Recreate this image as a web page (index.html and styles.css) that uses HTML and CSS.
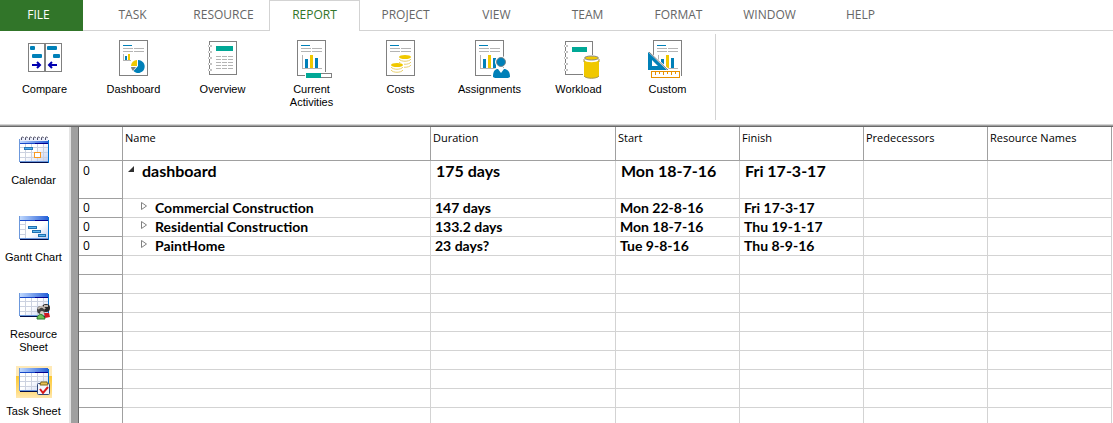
FILE: index.html
```html
<!DOCTYPE html>
<html lang="en">
<head>
  <meta charset="UTF-8">
  <meta name="viewport" content="width=device-width, initial-scale=1.0">
  <title>dashboard - Task Sheet</title>
  <link rel="stylesheet" href="styles.css">
</head>
<body>

  <!-- Menu tabs -->
  <nav class="tabs">
    <a class="file-tab" href="#file">FILE</a>
    <a class="tab" href="#task">TASK</a>
    <a class="tab" href="#resource">RESOURCE</a>
    <a class="tab active" href="#report">REPORT</a>
    <a class="tab" href="#project">PROJECT</a>
    <a class="tab" href="#view">VIEW</a>
    <a class="tab" href="#team">TEAM</a>
    <a class="tab" href="#format">FORMAT</a>
    <a class="tab" href="#window">WINDOW</a>
    <a class="tab" href="#help">HELP</a>
  </nav>

  <!-- Shared icon parts -->
  <svg class="defs" width="0" height="0" aria-hidden="true">
    <defs>
      <linearGradient id="titleBar">
        <stop offset="0" stop-color="#c4dcff"/>
        <stop offset="1" stop-color="#2860d8"/>
      </linearGradient>
      <linearGradient id="sheet" x2="1" y2="1">
        <stop offset="0" stop-color="#ffffff"/>
        <stop offset="0.5" stop-color="#ffffff"/>
        <stop offset="1" stop-color="#c4d0f0"/>
      </linearGradient>
      <g id="page" shape-rendering="crispEdges">
        <rect x="5.5" y="2.5" width="28" height="35" fill="#fff" stroke="#808080"/>
        <path d="M9 7.5h9" stroke="#0080b8"/>
        <path d="M9 10.5h10M20 10.5h10M9 13.5h10M20 13.5h10" stroke="#b4b4b4"/>
      </g>
      <g id="bars" shape-rendering="crispEdges">
        <path d="M10.5 17v13.5H30" fill="none" stroke="#b4b4b4"/>
        <path d="M13 21h3v9h-3zM23 20h3v10h-3z" fill="#0080b8"/>
        <path d="M18 17h3v13h-3z" fill="#f0c800"/>
      </g>
      <g id="notebook" shape-rendering="crispEdges">
        <rect x="6.5" y="3.5" width="27" height="33" fill="#fff" stroke="#808080"/>
        <path d="M5 7h4v2H5zM5 13h4v2H5zM5 19h4v2H5zM5 25h4v2H5zM5 31h4v2H5z" fill="#c4c4c4"/>
        <path d="M6 7h1v2H6zM6 13h1v2H6zM6 19h1v2H6zM6 25h1v2H6zM6 31h1v2H6z" fill="#fff"/>
      </g>
      <g id="sheetGrid" shape-rendering="crispEdges">
        <path d="M5 6h28v22H5z" fill="#001060"/>
        <path d="M4 5h28v21H4z" fill="url(#sheet)"/>
        <path d="M4 12.5h28M4 17.5h28M4 22.5h28M9.5 9v17M15.5 9v17M21.5 9v17M27.5 9v17" stroke="#ccd2e0"/>
        <path d="M3 4h29v4H3z" fill="url(#titleBar)"/>
        <path d="M4 8.5h15" stroke="#1848c8"/>
        <path d="M19 8.5h13" stroke="#000090"/>
        <path d="M3.5 4v23M3 26.5h29" fill="none" stroke="#6c98dc"/>
        <path d="M4 27.5h29" stroke="#000c48"/>
        <path d="M32.5 5v23" stroke="#0070d0"/>
      </g>
    </defs>
  </svg>

  <!-- Report ribbon -->
  <div class="ribbon">
    <div class="ribbon-group">
      <button class="ribbon-button">
        <svg class="ribbon-icon" viewBox="0 0 39 40">
          <g shape-rendering="crispEdges" fill="#fff" stroke="#808080">
            <rect x="3.5" y="5.5" width="16" height="28"/>
            <rect x="20.5" y="5.5" width="16" height="28"/>
          </g>
          <g fill="#0080b8">
            <rect x="5" y="8" width="5" height="4" rx="1"/>
            <rect x="7" y="16" width="10" height="4" rx="1"/>
            <rect x="22" y="8" width="10" height="4" rx="1"/>
            <rect x="28" y="16" width="7" height="4" rx="1"/>
          </g>
          <path d="M7 27h8M12 24l3 3-3 3M32 27h-8M27 24l-3 3 3 3" fill="none" stroke="#0000b0" stroke-width="2"/>
        </svg>
        <span>Compare</span>
      </button>
      <button class="ribbon-button">
        <svg class="ribbon-icon" viewBox="0 0 39 40">
          <use href="#page"/>
          <g shape-rendering="crispEdges">
            <path d="M9.5 16v6.5H17" fill="none" stroke="#b4b4b4"/>
            <path d="M11 18h2v4h-2z" fill="#0080b8"/>
            <path d="M14 16h2v6h-2z" fill="#f0c800"/>
          </g>
          <path d="M24 28V22a6.5 6.5 0 1 1-4.5 11z" fill="#0080b8"/>
          <path d="M23 28h-6a6 6 0 0 1 6-6z" fill="#f0c800"/>
          <path d="M22 29h-5a6 6 0 0 0 2 4z" fill="#808080"/>
        </svg>
        <span>Dashboard</span>
      </button>
      <button class="ribbon-button">
        <svg class="ribbon-icon" viewBox="0 0 39 40">
          <use href="#notebook"/>
          <g shape-rendering="crispEdges">
            <path d="M13 8h17v5H13z" fill="#00a896"/>
            <path d="M13 18.5h5m1 0h5m1 0h5M13 21.5h5m1 0h5m1 0h5M13 24.5h5m1 0h5m1 0h5M13 27.5h5m1 0h5m1 0h5M13 30.5h5m1 0h5m1 0h5" stroke="#b4b4b4"/>
          </g>
        </svg>
        <span>Overview</span>
      </button>
      <button class="ribbon-button">
        <svg class="ribbon-icon" viewBox="0 0 39 40">
          <use href="#page"/>
          <use href="#bars"/>
          <g shape-rendering="crispEdges">
            <path d="M13 34h27v6H13z" fill="#fff"/>
            <path d="M14 35h15v5H14z" fill="#00a896"/>
            <path d="M29 35.5h10.5v4H29" fill="none" stroke="#808080"/>
          </g>
        </svg>
        <span>Current Activities</span>
      </button>
      <button class="ribbon-button">
        <svg class="ribbon-icon" viewBox="0 0 39 40">
          <use href="#page"/>
          <g fill="none" stroke="#e8d070">
            <path d="M18 21c2 3 10 3 12 0M18 24c2 3 10 3 12 0M18 27c2 3 10 3 12 0"/>
          </g>
          <ellipse cx="24" cy="19" rx="6" ry="2" fill="#f0c800"/>
          <path d="M9 25h14v12H9z" fill="#fff"/>
          <g fill="none" stroke="#e8d070">
            <path d="M10 29c2 3 10 3 12 0M10 32c2 3 10 3 12 0"/>
          </g>
          <ellipse cx="16" cy="27" rx="6" ry="2" fill="#f0c800"/>
        </svg>
        <span>Costs</span>
      </button>
      <button class="ribbon-button">
        <svg class="ribbon-icon" viewBox="0 0 39 40">
          <use href="#page"/>
          <use href="#bars"/>
          <circle cx="31" cy="24" r="6" fill="#fff"/>
          <path d="M21 40c0-7 3-10 6-10h8c3 0 6 3 6 10z" fill="#fff"/>
          <circle cx="31" cy="24" r="4.5" fill="#0080b8" stroke="#78888c"/>
          <path d="M23 39c0-6 2-8 5-8l3 4 3-4c3 0 6 2 6 8l-2 1H25z" fill="#0080b8"/>
        </svg>
        <span>Assignments</span>
      </button>
      <button class="ribbon-button">
        <svg class="ribbon-icon" viewBox="0 0 39 40">
          <use href="#notebook"/>
          <path d="M13 9h15v5H13z" fill="#00a896" shape-rendering="crispEdges"/>
          <path d="M24 17h17v23H24z" fill="#fff"/>
          <path d="M25 22c2 3 13 3 15 0v16c-2 3-13 3-15 0z" fill="#f0c800"/>
          <ellipse cx="32.5" cy="20" rx="7" ry="2" fill="#f0c800" stroke="#888"/>
          <path d="M25 38c2 3 13 3 15 0M25 21v3M40 21v3" fill="none" stroke="#a89850"/>
        </svg>
        <span>Workload</span>
      </button>
      <button class="ribbon-button">
        <svg class="ribbon-icon" viewBox="0 0 39 40">
          <use href="#page"/>
          <use href="#bars"/>
          <path d="M0 12l22 20h12v8H0z" fill="#fff"/>
          <path d="M0 14l19 18H0zM4 22v6h6z" fill="#0080b8" fill-rule="evenodd"/>
          <path d="M1 14l19 18" stroke="#808080"/>
          <g shape-rendering="crispEdges" fill="none" stroke="#e89000">
            <rect x="3.5" y="33.5" width="28" height="6"/>
            <path d="M7.5 34v3M11.5 34v2M15.5 34v3M19.5 34v2M23.5 34v3M27.5 34v2"/>
          </g>
          <path d="M33.5 30v8" stroke="#808080"/>
        </svg>
        <span>Custom</span>
      </button>
    </div>
  </div>

  <main class="workspace">

    <!-- View switcher -->
    <aside class="views">
      <button class="view-button">
        <svg class="view-icon" viewBox="0 0 36 32">
          <use href="#sheetGrid"/>
          <path d="M4 3h28v3H4z" fill="#e8ecf8"/>
          <g fill="none" stroke="#505068">
            <path d="M5.5 5V3a1 1 0 0 1 2 0M9.5 5V3a1 1 0 0 1 2 0M13.5 5V3a1 1 0 0 1 2 0M17.5 5V3a1 1 0 0 1 2 0M21.5 5V3a1 1 0 0 1 2 0M25.5 5V3a1 1 0 0 1 2 0M29.5 5V3a1 1 0 0 1 2 0"/>
          </g>
          <g shape-rendering="crispEdges">
            <rect x="8.5" y="12.5" width="8" height="2" fill="#50b0f0" stroke="#2878b8"/>
            <rect x="18.5" y="17.5" width="6" height="5" fill="#fff" stroke="#f89820"/>
          </g>
        </svg>
        <span>Calendar</span>
      </button>
      <button class="view-button">
        <svg class="view-icon" viewBox="0 0 36 32">
          <use href="#sheetGrid"/>
          <g shape-rendering="crispEdges">
            <path d="M10 9h22v17H10z" fill="url(#sheet)"/>
            <path d="M12.5 14.5h8v2h-8zM16.5 18.5h8v2h-8zM22.5 22.5h7v2h-7z" fill="#60b8f0" stroke="#2070b0"/>
          </g>
        </svg>
        <span>Gantt Chart</span>
      </button>
      <button class="view-button">
        <svg class="view-icon" viewBox="0 0 36 32">
          <use href="#sheetGrid"/>
          <circle cx="30" cy="19" r="4" fill="#282828"/>
          <circle cx="25" cy="21" r="4" fill="#404040"/>
          <path d="M22 20c2-3 5-3 7 0M28 17h4" fill="none" stroke="#c0b8b0" stroke-width="2"/>
          <circle cx="26" cy="24" r="2" fill="#d8d0c8"/>
          <path d="M28 24h5l1 4-5 1z" fill="#d01820"/>
          <path d="M21 30c0-6 7-6 8 0z" fill="#70c058" stroke="#287828"/>
        </svg>
        <span>Resource Sheet</span>
      </button>
      <button class="view-button selected">
        <svg class="view-icon" viewBox="0 0 36 32">
          <g transform="translate(0 -2)">
            <use href="#sheetGrid"/>
          </g>
          <rect x="21.5" y="17.5" width="12" height="11" rx="1" fill="#f4f6ff" stroke="#304878"/>
          <path d="M24 19l1-3h6l1 3z" fill="#e8c050" stroke="#806820"/>
          <path d="M24 23l3 4 5-6" fill="none" stroke="#d81818" stroke-width="2"/>
        </svg>
        <span>Task Sheet</span>
      </button>
    </aside>

    <!-- Task table -->
    <div class="sheet">
      <table class="tasks">
        <colgroup>
          <col class="col-info">
          <col>
          <col class="col-duration">
          <col class="col-date">
          <col class="col-date">
          <col class="col-date">
          <col class="col-date">
        </colgroup>
        <thead>
          <tr><th></th><th>Name</th><th>Duration</th><th>Start</th><th>Finish</th><th>Predecessors</th><th>Resource Names</th></tr>
        </thead>
        <tbody>
          <tr class="project">
            <td>0</td>
            <td><div class="task-name"><button class="toggle" aria-label="Collapse dashboard"><svg viewBox="0 0 6 8" width="6" height="8"><path d="M6 1v6H0z" fill="#303030"/></svg></button>dashboard</div></td>
            <td>175 days</td><td>Mon 18-7-16</td><td>Fri 17-3-17</td><td></td><td></td>
          </tr>
          <tr class="task">
            <td>0</td>
            <td><div class="task-name"><button class="toggle" aria-label="Expand Commercial Construction"><svg viewBox="0 0 6 8" width="6" height="8"><path d="M.5.5l5 3.500-5 3.500z" fill="#fff" stroke="#808080"/></svg></button>Commercial Construction</div></td>
            <td>147 days</td><td>Mon 22-8-16</td><td>Fri 17-3-17</td><td></td><td></td>
          </tr>
          <tr class="task">
            <td>0</td>
            <td><div class="task-name"><button class="toggle" aria-label="Expand Residential Construction"><svg viewBox="0 0 6 8" width="6" height="8"><path d="M.5.5l5 3.500-5 3.500z" fill="#fff" stroke="#808080"/></svg></button>Residential Construction</div></td>
            <td>133.2 days</td><td>Mon 18-7-16</td><td>Thu 19-1-17</td><td></td><td></td>
          </tr>
          <tr class="task">
            <td>0</td>
            <td><div class="task-name"><button class="toggle" aria-label="Expand PaintHome"><svg viewBox="0 0 6 8" width="6" height="8"><path d="M.5.5l5 3.500-5 3.500z" fill="#fff" stroke="#808080"/></svg></button>PaintHome</div></td>
            <td>23 days?</td><td>Tue 9-8-16</td><td>Thu 8-9-16</td><td></td><td></td>
          </tr>
          <tr><td></td><td></td><td></td><td></td><td></td><td></td><td></td></tr>
          <tr><td></td><td></td><td></td><td></td><td></td><td></td><td></td></tr>
          <tr><td></td><td></td><td></td><td></td><td></td><td></td><td></td></tr>
          <tr><td></td><td></td><td></td><td></td><td></td><td></td><td></td></tr>
          <tr><td></td><td></td><td></td><td></td><td></td><td></td><td></td></tr>
          <tr><td></td><td></td><td></td><td></td><td></td><td></td><td></td></tr>
          <tr><td></td><td></td><td></td><td></td><td></td><td></td><td></td></tr>
          <tr><td></td><td></td><td></td><td></td><td></td><td></td><td></td></tr>
          <tr><td></td><td></td><td></td><td></td><td></td><td></td><td></td></tr>
        </tbody>
      </table>
    </div>
  </main>

</body>
</html>
```

FILE: styles.css
```css
* {
  margin: 0;
  padding: 0;
  box-sizing: border-box;
}

body {
  height: 100vh;
  display: flex;
  flex-direction: column;
  overflow: hidden;
  background: #fff;
  color: #000;
  font-family: "Liberation Sans", Arial, sans-serif;
  font-size: 11px;
  line-height: 13px;
}

button {
  border: none;
  background: transparent;
  color: inherit;
  font: inherit;
  cursor: pointer;
}

.defs {
  position: absolute;
}

/* Tabs */
.tabs {
  display: flex;
  height: 31px;
  flex-shrink: 0;
  font-family: "Open Sans", sans-serif;
  font-size: 12px;
  line-height: 30px;
  box-shadow: inset 0 -1px #d3d3d3;
}

.tabs a {
  text-align: center;
  text-decoration: none;
}

.file-tab {
  width: 83px;
  margin-right: 4px;
  padding-right: 6px;
  background: #317529;
  color: #fff;
}

.tab {
  width: 91px;
  color: #666;
}

.tab.active {
  background: #fff;
  border: 1px solid #d3d3d3;
  border-bottom: none;
  color: #317529;
  line-height: 28px;
}

/* Ribbon */
.ribbon {
  display: flex;
  height: 96px;
  flex-shrink: 0;
  padding: 3px 0 6px;
  border-bottom: 1px solid #696969;
  box-shadow: inset 0 -1px #a0a0a0, inset 0 -2px #d3d3d3;
}

.ribbon-group {
  display: flex;
  padding-right: 3px;
  border-right: 1px solid #d3d3d3;
}

.ribbon-button {
  width: 89px;
  padding: 4px 16px 0;
  display: flex;
  flex-direction: column;
  align-items: center;
  gap: 5px;
}

.ribbon-icon {
  width: 39px;
  height: 40px;
  flex-shrink: 0;
  overflow: visible;
}

/* Workspace */
.workspace {
  display: flex;
  flex: 1;
  min-height: 0;
}

.views {
  width: 78px;
  flex-shrink: 0;
  padding: 8px 2px 0 0;
  border-right: 7px solid #a0a0a0;
  box-shadow: inset -2px 0 #e3e3e3;
}

.view-button {
  width: 67px;
  min-height: 77px;
  display: flex;
  flex-direction: column;
  align-items: center;
  gap: 7px;
}

.view-icon {
  width: 36px;
  height: 32px;
  flex-shrink: 0;
}

.view-button.selected .view-icon {
  background: linear-gradient(#ffeab8 0 30%, #fcc830 30%, #ffdc80 80%, #ffe8b0);
}

/* Task table */
.sheet {
  flex: 1;
  padding-right: 1px;
  border-left: 1px solid #696969;
}

.tasks {
  width: 100%;
  table-layout: fixed;
  border-collapse: separate;
  border-spacing: 0;
  font-family: "Open Sans", sans-serif;
  font-size: 12px;
  line-height: 18px;
}

.col-info {
  width: 44px;
}

.col-duration {
  width: 185px;
}

.col-date {
  width: 124px;
}

th {
  height: 34px;
  padding: 2px;
  border-right: 1px solid #a0a0a0;
  border-bottom: 1px solid #a0a0a0;
  font-size: 11px;
  font-weight: 400;
  text-align: left;
  vertical-align: top;
}

td {
  height: 19px;
  padding: 0 4px;
  border-right: 1px solid #d3d3d3;
  border-bottom: 1px solid #d3d3d3;
  vertical-align: top;
  white-space: nowrap;
}

td:first-child {
  border-color: #a0a0a0;
}

.project td {
  height: 38px;
  padding: 1px 5px;
}

.project td:first-child {
  padding: 1px 4px;
}

.project td + td,
.task td + td {
  font-family: Lato, sans-serif;
  font-weight: 700;
}

.project td + td {
  font-size: 16px;
}

.task td + td {
  font-size: 14px;
}

.task-name {
  display: flex;
  align-items: center;
  gap: 8px;
}

.task .task-name {
  padding-left: 14px;
}

.toggle {
  display: flex;
  padding-bottom: 4px;
}
```
